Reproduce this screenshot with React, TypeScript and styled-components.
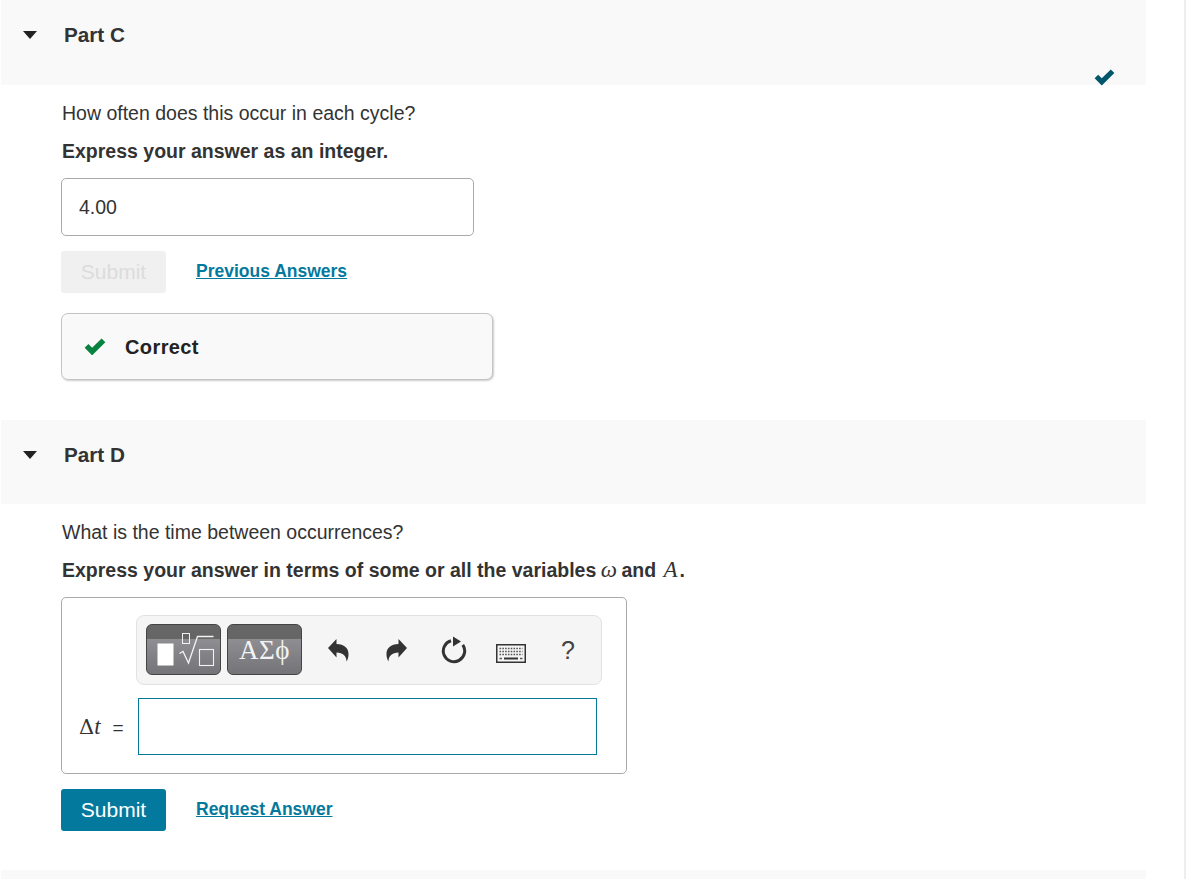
import styled, { createGlobalStyle } from 'styled-components';

const GlobalStyle = createGlobalStyle`
  html, body {
    margin: 0;
    padding: 0;
    height: 879px;
    overflow: hidden;
    background: #fff;
    font-family: "Liberation Sans", Arial, sans-serif;
    color: #333;
  }
`;

const Page = styled.div`
  position: relative;
  width: 1186px;
  height: 879px;
  overflow: hidden;
  box-sizing: border-box;
  border-right: 2px solid #eeeeee;
`;

const Column = styled.main`
  width: 1145px;
  margin-left: 1px;
`;

const PartHeader = styled.header<{ $height: number }>`
  height: ${({ $height }) => $height}px;
  box-sizing: border-box;
  background: #f9f9f9;
  display: flex;
  align-items: flex-start;
  padding: 23px 0 0 22px;
`;

const Caret = styled.span`
  width: 0;
  height: 0;
  margin-top: 8px;
  border-left: 7.5px solid transparent;
  border-right: 7.5px solid transparent;
  border-top: 8px solid #222;
`;

const PartTitle = styled.h3`
  margin: 0 0 0 27px;
  font-size: 20.7px;
  line-height: 23px;
  font-weight: 700;
  color: #333;
`;

const PartBody = styled.section<{ $height: number }>`
  height: ${({ $height }) => $height}px;
  box-sizing: border-box;
  padding: 16px 0 0 60px;
`;

const Question = styled.p`
  margin: 0 0 0 1px;
  font-size: 19.5px;
  line-height: 24px;
  color: #333;
`;

const Instruction = styled.p`
  margin: 14px 0 15px 1px;
  font-size: 19.5px;
  line-height: 24px;
  font-weight: 700;
  color: #333;
`;

const MathVar = styled.span<{ $side?: number }>`
  font-family: "Liberation Serif", "DejaVu Serif", serif;
  font-style: italic;
  font-weight: 400;
  font-size: 23px;
  line-height: 1;
  margin: 0 ${({ $side }) => $side ?? 0}px;
`;

const AnswerField = styled.div`
  width: 413px;
  height: 58px;
  box-sizing: border-box;
  border: 1px solid #aaa;
  border-radius: 5px;
  display: flex;
  align-items: center;
  padding-left: 17px;
  font-size: 19.5px;
  color: #333;
`;

const ActionRow = styled.div`
  display: flex;
  align-items: center;
  gap: 30px;
  margin-top: 15px;
`;

const SubmitButton = styled.button<{ $disabled?: boolean }>`
  width: 105px;
  height: 42px;
  border: 0;
  border-radius: 3px;
  padding: 0;
  font-family: inherit;
  font-size: 21px;
  background: ${({ $disabled }) => ($disabled ? '#f0f0f0' : '#04799e')};
  color: ${({ $disabled }) => ($disabled ? '#dcdcdc' : '#fff')};
`;

const TextLink = styled.a`
  font-size: 17.5px;
  font-weight: 700;
  color: #04799e;
  text-decoration: underline;
  position: relative;
  top: -1px;
`;

const Feedback = styled.div`
  width: 432px;
  height: 67px;
  box-sizing: border-box;
  margin-top: 20px;
  background: #f9f9f9;
  border: 1px solid #c4c4c4;
  border-radius: 7px;
  box-shadow: 1px 1px 2px rgba(0, 0, 0, 0.2);
  display: flex;
  align-items: center;
  gap: 19px;
  padding-left: 22px;
`;

const FeedbackText = styled.span`
  margin-top: 2px;
  font-size: 20px;
  font-weight: 700;
  letter-spacing: 0.4px;
  color: #222;
`;

const EditorCard = styled.div`
  width: 566px;
  height: 177px;
  box-sizing: border-box;
  border: 1px solid #aaa;
  border-radius: 5px;
  padding: 17px 24px 0 74px;
`;

const Toolbar = styled.div`
  height: 70px;
  box-sizing: border-box;
  background: #f5f5f5;
  border: 1px solid #e2e2e2;
  border-radius: 8px;
  display: flex;
  align-items: center;
  padding-left: 9px;
`;

const PaletteButton = styled.div`
  width: 75px;
  height: 51px;
  box-sizing: border-box;
  margin: 0 6px 1px 0;
  border: 1px solid #444;
  border-radius: 6px;
  background: linear-gradient(#666 0, #666 28%, #8f8f93 28%, #747478 100%);
  display: flex;
  align-items: center;
  justify-content: center;
  color: #f2f2f2;
  overflow: hidden;
`;

const GreekLabel = styled.span`
  font-family: "Liberation Serif", serif;
  font-size: 27px;
  margin-top: 2px;
  letter-spacing: 0.5px;
`;

const ToolIcon = styled.span<{ $width: number; $drop?: number }>`
  width: ${({ $width }) => $width}px;
  margin-top: ${({ $drop }) => $drop ?? 0}px;
  display: flex;
  justify-content: center;
  color: #333;
`;

const HelpMark = styled.span`
  font-size: 25px;
  color: #444;
  line-height: 1;
`;

const EquationRow = styled.div`
  display: flex;
  align-items: center;
  margin-top: 13px;
  margin-left: -57px;
`;

const EquationLabel = styled.span`
  width: 59px;
  box-sizing: border-box;
  font-family: "DejaVu Serif", "Liberation Serif", serif;
  font-size: 21px;
  white-space: nowrap;
  color: #333;
`;

const EquationEquals = styled.span`
  font-family: "Liberation Sans", sans-serif;
  font-size: 19px;
  margin-left: 12px;
`;

const MathInput = styled.div`
  width: 459px;
  height: 57px;
  box-sizing: border-box;
  border: 1px solid #04799e;
  background: #fff;
`;

const NextBand = styled.div`
  height: 9px;
  background: #f9f9f9;
`;

const StatusCheck = styled.span`
  position: absolute;
  left: 1094px;
  top: 69px;
  line-height: 0;
`;

const Check = ({ color, width }: { color: string; width: number }) => (
  <svg width={width} height={width * 0.8} viewBox="0 0 20 16">
    <path d="M0.6 8.8 L4 5.4 L7.4 8.8 L16 0.4 L19.4 3.8 L7.4 15.8 Z" fill={color} />
  </svg>
);

const RadicalIcon = () => (
  <svg width="68" height="46" viewBox="0 0 68 46">
    <rect x="7.5" y="16.5" width="16" height="22" fill="#fff" />
    <rect x="32.5" y="6.5" width="7" height="10" fill="none" stroke="#f2f2f2" strokeWidth="1" />
    <path d="M29.5 26.5 L33 24.5 L38.5 36 L47.5 9.5 L63.5 9.5" fill="none" stroke="#f2f2f2" strokeWidth="1.3" />
    <rect x="49.5" y="22.5" width="14" height="16" fill="none" stroke="#f2f2f2" strokeWidth="1.1" />
  </svg>
);

const UndoIcon = () => (
  <svg width="21" height="23" viewBox="0 0 21 23">
    <path d="M0 9 L8.5 0 L8.5 5 C16 5 21 9 20.5 16 C20.3 19 19.5 21 18.5 22.5 C18.5 17 15 13.5 8.5 13.5 L8.5 18.5 Z" fill="#333" />
  </svg>
);

const RedoIcon = () => (
  <svg width="21" height="23" viewBox="0 0 21 23">
    <path d="M21 9 L12.5 0 L12.5 5 C5 5 0 9 0.5 16 C0.7 19 1.5 21 2.5 22.5 C2.5 17 6 13.5 12.5 13.5 L12.5 18.5 Z" fill="#333" />
  </svg>
);

const ResetIcon = () => (
  <svg width="26" height="28" viewBox="0 0 26 28">
    <path d="M10 4.7 A10.7 10.7 0 1 0 21.8 8.9" fill="none" stroke="#333" strokeWidth="3" />
    <path d="M12 0.5 L20 5.5 L12 10.5 Z" fill="#333" />
  </svg>
);

const KeyboardIcon = () => (
  <svg width="30" height="19" viewBox="0 0 30 19">
    <rect x="0.75" y="0.75" width="28.5" height="17.5" fill="#f5f5f5" stroke="#333" strokeWidth="1.5" />
    <path d="M3.5 4.5 H26.5 M3.5 7.5 H26.5 M3.5 10.5 H26.5" stroke="#555" strokeWidth="1.4" strokeDasharray="1.6 1.2" />
    <path d="M8 14.5 H22" stroke="#333" strokeWidth="2" />
    <path d="M3.5 14.5 H6 M24 14.5 H26.5" stroke="#555" strokeWidth="1.5" />
  </svg>
);

export default function App() {
  return (
    <Page>
      <GlobalStyle />
      <Column>
        <PartHeader $height={85}>
          <Caret />
          <PartTitle>Part C</PartTitle>
        </PartHeader>
        <PartBody $height={335}>
          <Question>How often does this occur in each cycle?</Question>
          <Instruction>Express your answer as an integer.</Instruction>
          <AnswerField>4.00</AnswerField>
          <ActionRow>
            <SubmitButton $disabled>Submit</SubmitButton>
            <TextLink>Previous Answers</TextLink>
          </ActionRow>
          <Feedback>
            <Check color="#07823f" width={22} />
            <FeedbackText>Correct</FeedbackText>
          </Feedback>
        </PartBody>
        <PartHeader $height={84}>
          <Caret />
          <PartTitle>Part D</PartTitle>
        </PartHeader>
        <PartBody $height={366}>
          <Question>What is the time between occurrences?</Question>
          <Instruction>
            Express your answer in terms of some or all the variables <MathVar $side={-1}>ω</MathVar> and <MathVar $side={2}>A</MathVar>.
          </Instruction>
          <EditorCard>
            <Toolbar>
              <PaletteButton>
                <RadicalIcon />
              </PaletteButton>
              <PaletteButton>
                <GreekLabel>ΑΣϕ</GreekLabel>
              </PaletteButton>
              <ToolIcon $width={60}>
                <UndoIcon />
              </ToolIcon>
              <ToolIcon $width={57}>
                <RedoIcon />
              </ToolIcon>
              <ToolIcon $width={58}>
                <ResetIcon />
              </ToolIcon>
              <ToolIcon $width={56} $drop={6}>
                <KeyboardIcon />
              </ToolIcon>
              <ToolIcon $width={58}>
                <HelpMark>?</HelpMark>
              </ToolIcon>
            </Toolbar>
            <EquationRow>
              <EquationLabel>
                Δ<MathVar>t</MathVar>
                <EquationEquals>=</EquationEquals>
              </EquationLabel>
              <MathInput />
            </EquationRow>
          </EditorCard>
          <ActionRow>
            <SubmitButton>Submit</SubmitButton>
            <TextLink>Request Answer</TextLink>
          </ActionRow>
        </PartBody>
        <NextBand />
      </Column>
      <StatusCheck>
        <Check color="#00566b" width={21} />
      </StatusCheck>
    </Page>
  );
}
